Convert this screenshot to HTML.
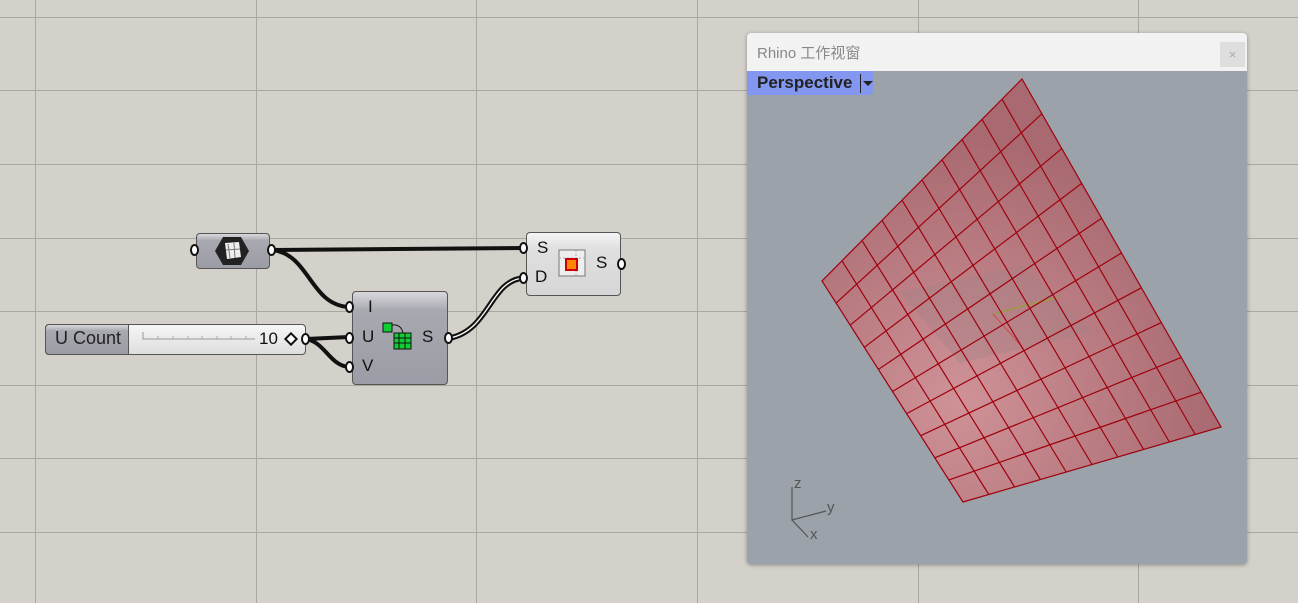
<!DOCTYPE html>
<html><head><meta charset="utf-8"><style>
body{margin:0;width:1298px;height:603px;overflow:hidden;background:#d4d0ca;font-family:"Liberation Sans","Noto Sans CJK SC",sans-serif;position:relative}
.grid{position:absolute;left:0;top:0}
.node{position:absolute;border:1px solid #555;border-radius:4px;box-sizing:border-box}
.dark{background:linear-gradient(#d8d8dc 0,#a8a8b0 20%,#9c9ca6 100%)}
.light{background:linear-gradient(#f4f4f4 0,#e0e0e0 25%,#d6d6d6 100%)}
.lbl{position:absolute;font-size:17px;color:#111}
.port{position:absolute;width:9px;height:12px;border:2px solid #111;border-radius:50%;background:#fff;box-sizing:border-box}
</style></head><body>
<svg class="grid" width="1298" height="603">
<g stroke="#aaa6a0" stroke-width="1">
<line x1="35.5" y1="0" x2="35.5" y2="603"/><line x1="256.5" y1="0" x2="256.5" y2="603"/><line x1="476.5" y1="0" x2="476.5" y2="603"/><line x1="697.5" y1="0" x2="697.5" y2="603"/><line x1="918.5" y1="0" x2="918.5" y2="603"/><line x1="1138.5" y1="0" x2="1138.5" y2="603"/>
<line x1="0" y1="17.5" x2="1298" y2="17.5"/><line x1="0" y1="90.5" x2="1298" y2="90.5"/><line x1="0" y1="164.5" x2="1298" y2="164.5"/><line x1="0" y1="238.5" x2="1298" y2="238.5"/><line x1="0" y1="311.5" x2="1298" y2="311.5"/><line x1="0" y1="385.5" x2="1298" y2="385.5"/><line x1="0" y1="458.5" x2="1298" y2="458.5"/><line x1="0" y1="532.5" x2="1298" y2="532.5"/>
</g>
<g fill="none" stroke="#111" stroke-width="4">
<path d="M273 250 L524 248"/>
<path d="M273 250 C310 255,310 305,349 307"/>
<path d="M306 339 L349 337"/>
<path d="M306 339 C325 342,330 366,349 367"/>
</g>
<g fill="none" stroke="#111" stroke-width="5.5"><path d="M450 338 C490 330,490 280,524 278"/></g>
<g fill="none" stroke="#fff" stroke-width="1.3"><path d="M450 338 C490 330,490 280,524 278"/></g>
</svg>

<div class="node dark" style="left:196px;top:233px;width:74px;height:36px"></div>
<svg style="position:absolute;left:214px;top:235px" width="36" height="32"><polygon points="9,2 27,2 35,16 27,30 9,30 1,16" fill="#222"/><path d="M11 8 L25 7 L27 22 L13 24 Z" fill="#eee"/><path d="M14 9 L16 23 M20 8 L21 23 M12 15 L26 14" stroke="#777" stroke-width="1"/></svg>
<div class="port" style="left:190px;top:244px"></div><div class="port" style="left:267px;top:244px"></div>

<div class="node" style="left:45px;top:324px;width:261px;height:31px;background:linear-gradient(#f6f6f6,#dedede)"></div>
<div class="node dark" style="left:45px;top:324px;width:84px;height:31px;border-radius:4px 0 0 4px"></div>
<div class="lbl" style="left:55px;top:328px;font-size:18px;color:#222">U Count</div>
<svg style="position:absolute;left:140px;top:330px" width="120" height="14"><path d="M3 2 V9 H115" stroke="#999" fill="none"/><g stroke="#aaa"><path d="M18 6V9M33 6V9M48 6V9M62 6V9M77 6V9M91 6V9M106 6V9"/></g></svg>
<div class="lbl" style="left:259px;top:329px">10</div>
<div style="position:absolute;left:286px;top:334px;width:6px;height:6px;border:2px solid #111;transform:rotate(45deg);background:#fff"></div>
<div class="port" style="left:301px;top:333px"></div>

<div class="node dark" style="left:352px;top:291px;width:96px;height:94px"></div>
<div class="lbl" style="left:368px;top:297px">I</div>
<div class="lbl" style="left:362px;top:327px">U</div>
<div class="lbl" style="left:362px;top:356px">V</div>
<div class="lbl" style="left:422px;top:327px">S</div>
<svg style="position:absolute;left:381px;top:321px" width="32" height="30"><rect x="2" y="2" width="9" height="9" fill="#1c3" stroke="#111"/><path d="M11 4 Q20 3 22 12" stroke="#111" fill="none"/><rect x="13" y="12" width="17" height="16" fill="#1c3" stroke="#111"/><g stroke="#111"><path d="M13 17H30M13 22H30M18 12V28M24 12V28"/></g></svg>
<div class="port" style="left:345px;top:301px"></div><div class="port" style="left:345px;top:332px"></div><div class="port" style="left:345px;top:361px"></div><div class="port" style="left:444px;top:332px"></div>

<div class="node light" style="left:526px;top:232px;width:95px;height:64px"></div>
<div class="lbl" style="left:537px;top:238px">S</div>
<div class="lbl" style="left:535px;top:267px">D</div>
<div class="lbl" style="left:596px;top:253px">S</div>
<svg style="position:absolute;left:558px;top:249px" width="28" height="28"><rect x="1" y="1" width="26" height="26" fill="#eee" stroke="#777"/><path d="M1 9H27M18 1V27" stroke="#aaa" stroke-dasharray="2 2"/><rect x="8" y="10" width="11" height="11" fill="#f80" stroke="#c00" stroke-width="2"/></svg>
<div class="port" style="left:519px;top:242px"></div><div class="port" style="left:519px;top:272px"></div><div class="port" style="left:617px;top:258px"></div>

<div style="position:absolute;left:747px;top:33px;width:500px;height:531px;background:#9ba2a9;border-radius:4px;box-shadow:0 1px 4px rgba(0,0,0,.35);overflow:hidden">
<div style="height:38px;background:#f2f2f2;position:relative">
<div style="position:absolute;left:10px;top:9px;font-size:15px;color:#888">Rhino 工作视窗</div>
<div style="position:absolute;left:473px;top:9px;width:25px;height:25px;background:#dedede;color:#aaa;font-size:13px;text-align:center;line-height:25px">×</div>
</div>
<div style="position:absolute;left:0;top:38px;width:126px;height:24px;background:#8497f0;border-radius:0 0 4px 0">
<div style="position:absolute;left:10px;top:2px;font-size:17px;font-weight:bold;color:#222">Perspective</div>
<div style="position:absolute;left:113px;top:3px;width:1px;height:19px;background:#222"></div>
<div style="position:absolute;left:116px;top:10px;border:5px solid transparent;border-top:5px solid #222"></div>
</div>
</div>
<svg style="position:absolute;left:0;top:0" width="1298" height="603">
<defs><radialGradient id="g" cx="960" cy="400" r="260" gradientUnits="userSpaceOnUse"><stop offset="0" stop-color="#cf9297"/><stop offset="1" stop-color="#a86a70"/></radialGradient></defs>
<polygon points="1022,79 1221,427 963,502 822,281" fill="url(#g)"/>
<polygon points="900,292 1023,265 1093,332 960,363" fill="#a08088" opacity=".35"/>
<path d="M993 314 L1058 297" stroke="#9a9a40" stroke-width="1.5"/><path d="M993 314 L1023 348" stroke="#d05050" stroke-width="1.2"/>
<g stroke="#a0000e" stroke-width="1.2" fill="none">
<polygon points="1022,79 1221,427 963,502 822,281"/>
<path d="M1041.9 113.8L836.1 303.1M1061.8 148.6L850.2 325.2M1081.7 183.4L864.3 347.3M1101.6 218.2L878.4 369.4M1121.5 253L892.5 391.5M1141.4 287.8L906.6 413.6M1161.3 322.6L920.7 435.7M1181.2 357.4L934.8 457.8M1201.1 392.2L948.9 479.9"/>
<path d="M1002 99.2L1195.2 434.5M982 119.4L1169.4 442M962 139.6L1143.6 449.5M942 159.8L1117.8 457M922 180L1092 464.5M902 200.2L1066.2 472M882 220.4L1040.4 479.5M862 240.6L1014.6 487M842 260.8L988.8 494.5"/>
</g>
<g stroke="#555" stroke-width="1.2" fill="none"><path d="M792 487V520L826 511M792 520L808 537"/></g>
<g font-size="15" fill="#555" font-family="Liberation Sans,sans-serif"><text x="794" y="488">z</text><text x="827" y="512">y</text><text x="810" y="539">x</text></g>
</svg>
</body></html>
